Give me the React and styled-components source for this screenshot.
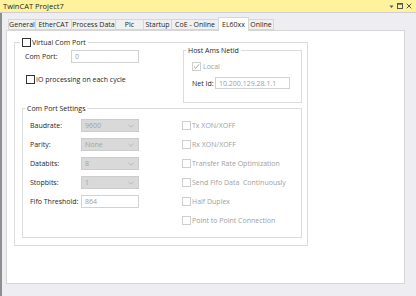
import React from 'react';
import styled, { createGlobalStyle } from 'styled-components';

const GlobalStyle = createGlobalStyle`
  html, body {
    margin: 0;
    padding: 0;
  }
  body {
    width: 416px;
    height: 296px;
    overflow: hidden;
    background: #eeeef2;
    font-family: "Open Sans", "Noto Sans", sans-serif;
    font-size: 7px;
    color: #1e1e1e;
  }
`;

const Window = styled.div`
  width: 416px;
  height: 296px;
  display: flex;
  flex-direction: column;
`;

const TitleBar = styled.div`
  height: 12px;
  flex: none;
  display: flex;
  align-items: center;
  justify-content: space-between;
  padding: 0 4px 0 3px;
  background: #fff29d;
  border-bottom: 1px solid #cfcfcf;
  font-size: 7.5px;
  color: #1e1e1e;
`;

const TitleButtons = styled.div`
  display: flex;
  align-items: center;
  gap: 3px;
  color: #555;
`;

const Body = styled.div`
  flex: 1;
  display: flex;
  flex-direction: column;
  border-left: 2px solid #8e8e8e;
  padding: 3px 11px 12px 4px;
  min-height: 0;
`;

const TabStrip = styled.div`
  display: flex;
  align-items: flex-end;
  margin-left: 3px;
  height: 14px;
`;

const Tab = styled.div`
  width: ${p => p.$w}px;
  height: ${p => (p.$active ? 14 : 11)}px;
  box-sizing: border-box;
  margin-left: -1px;
  margin-bottom: ${p => (p.$active ? -1 : 0)}px;
  display: flex;
  align-items: center;
  justify-content: center;
  background: ${p => (p.$active ? '#ffffff' : '#f0f0f0')};
  border: 1px solid #d6d6d6;
  border-bottom: ${p => (p.$active ? 'none' : '1px solid #d6d6d6')};
  color: #1e1e1e;
  position: relative;
  z-index: ${p => (p.$active ? 1 : 0)};
  white-space: nowrap;
`;

const Panel = styled.div`
  flex: 1;
  background: #ffffff;
  border: 1px solid #d6d6d6;
  padding: 11px 0 0 7px;
`;

const GroupBox = styled.div`
  display: flex;
  flex-direction: column;
  box-sizing: border-box;
  width: ${p => (p.$w ? `${p.$w}px` : 'auto')};
  border: 1px solid #dcdcdc;
  padding: ${p => p.$pad};
  margin-top: ${p => p.$mt || 0}px;
`;

const Legend = styled.div`
  align-self: flex-start;
  display: flex;
  align-items: center;
  gap: 1px;
  height: 9px;
  line-height: 9px;
  margin: -5px 0 0 ${p => p.$ml}px;
  padding: 0 2px;
  background: #ffffff;
  color: #1e1e1e;
  white-space: nowrap;
`;

const TopRow = styled.div`
  display: flex;
  margin-top: 3px;
`;

const LeftColumn = styled.div`
  width: 161px;
  display: flex;
  flex-direction: column;
`;

const FieldRow = styled.div`
  display: flex;
  align-items: center;
  height: ${p => p.$h || 13}px;
  margin-top: ${p => p.$mt || 0}px;
  padding-left: ${p => p.$pl || 0}px;
`;

const Label = styled.span`
  width: ${p => p.$w}px;
  flex: none;
  color: #1e1e1e;
  white-space: nowrap;
`;

const TextBox = styled.div`
  width: ${p => p.$w}px;
  height: ${p => p.$h || 13}px;
  box-sizing: border-box;
  display: flex;
  align-items: center;
  padding-left: 3px;
  background: #ffffff;
  border: 1px solid #d2d2d2;
  color: #a0a0a0;
`;

const Combo = styled.div`
  width: 58px;
  height: 13px;
  box-sizing: border-box;
  display: flex;
  align-items: center;
  justify-content: space-between;
  padding: 0 4px 0 3px;
  background: #d9d9d9;
  border: 1px solid #cccccc;
  color: #a3a3a3;
`;

const CheckRow = styled.div`
  display: flex;
  align-items: center;
  gap: ${p => p.$gap || 1}px;
  height: ${p => p.$h || 9}px;
  margin-top: ${p => p.$mt || 0}px;
  padding-left: ${p => p.$pl || 0}px;
  color: ${p => (p.$disabled ? '#a0a0a0' : '#1e1e1e')};
  white-space: pre;
`;

const Box = styled.span`
  width: 9px;
  height: 9px;
  box-sizing: border-box;
  flex: none;
  display: flex;
  align-items: center;
  justify-content: center;
  background: #ffffff;
  border: 1px solid ${p => (p.$disabled ? '#cfcfcf' : '#333333')};
`;

const SettingsGrid = styled.div`
  display: grid;
  grid-template-columns: 152px 1fr;
  margin-top: 3px;
`;

const Column = styled.div`
  display: flex;
  flex-direction: column;
`;

const Check = ({ checked, disabled }) => (
  <Box $disabled={disabled}>
    {checked && (
      <svg width="7" height="7" viewBox="0 0 7 7">
        <path d="M1 3.6 L2.8 5.3 L6 1.4" fill="none" stroke="#a8a8a8" strokeWidth="1" />
      </svg>
    )}
  </Box>
);

const Chevron = () => (
  <svg width="6" height="4" viewBox="0 0 6 4">
    <path d="M0.5 0.8 L3 3.2 L5.5 0.8" fill="none" stroke="#b0b0b0" strokeWidth="0.8" />
  </svg>
);

const tabs = [
  { name: 'General', w: 28 },
  { name: 'EtherCAT', w: 37 },
  { name: 'Process Data', w: 45 },
  { name: 'Plc', w: 29 },
  { name: 'Startup', w: 29 },
  { name: 'CoE - Online', w: 48 },
  { name: 'EL60xx', w: 31, active: true },
  { name: 'Online', w: 26 },
];

const combos = [
  { label: 'Baudrate:', value: '9600' },
  { label: 'Parity:', value: 'None' },
  { label: 'Databits:', value: '8' },
  { label: 'Stopbits:', value: '1' },
];

const options = [
  'Tx XON/XOFF',
  'Rx XON/XOFF',
  'Transfer Rate Optimization',
  'Send Fifo Data  Continuously',
  'Half Duplex',
  'Point to Point Connection',
];

export default function App() {
  return (
    <Window>
      <GlobalStyle />
      <TitleBar>
        <span>TwinCAT Project7</span>
        <TitleButtons>
          <svg width="5" height="5" viewBox="0 0 5 5">
            <path d="M0.5 1.5 L4.5 1.5 L2.5 4 Z" fill="#555" />
          </svg>
          <svg width="6" height="6" viewBox="0 0 6 6">
            <rect x="0.5" y="0.5" width="5" height="5" fill="none" stroke="#555" strokeWidth="1" />
            <line x1="0.5" y1="1.2" x2="5.5" y2="1.2" stroke="#555" strokeWidth="1" />
          </svg>
          <svg width="6" height="6" viewBox="0 0 6 6">
            <path d="M0.7 0.7 L5.3 5.3 M5.3 0.7 L0.7 5.3" stroke="#555" strokeWidth="1" />
          </svg>
        </TitleButtons>
      </TitleBar>
      <Body>
        <TabStrip>
          {tabs.map(t => (
            <Tab key={t.name} $w={t.w} $active={t.active}>
              {t.name}
            </Tab>
          ))}
        </TabStrip>
        <Panel>
          <GroupBox $w={294} $pad="0 5px 7px 7px">
            <Legend $ml={-2}>
              <Check />
              <span>Virtual Com Port</span>
            </Legend>
            <TopRow>
              <LeftColumn>
                <FieldRow $pl={3}>
                  <Label $w={46}>Com Port:</Label>
                  <TextBox $w={68}>0</TextBox>
                </FieldRow>
                <CheckRow $mt={12} $pl={4}>
                  <Check />
                  <span>IO processing on each cycle</span>
                </CheckRow>
              </LeftColumn>
              <GroupBox $w={119} $pad="0 8px 13px 8px">
                <Legend $ml={-6}>Host Ams Netid</Legend>
                <CheckRow $mt={7} $gap={2} $disabled>
                  <Check checked disabled />
                  <span>Local</span>
                </CheckRow>
                <FieldRow $mt={6} $h={12}>
                  <Label $w={23}>Net Id:</Label>
                  <TextBox $w={75} $h={12}>10.200.129.28.1.1</TextBox>
                </FieldRow>
              </GroupBox>
            </TopRow>
            <GroupBox $mt={5} $pad="0 7px 7px 7px">
              <Legend $ml={-5}>Com Port Settings</Legend>
              <SettingsGrid>
                <Column>
                  {combos.map(c => (
                    <FieldRow key={c.label} $h={19}>
                      <Label $w={51}>{c.label}</Label>
                      <Combo>
                        <span>{c.value}</span>
                        <Chevron />
                      </Combo>
                    </FieldRow>
                  ))}
                  <FieldRow $h={19}>
                    <Label $w={51}>Fifo Threshold:</Label>
                    <TextBox $w={58}>864</TextBox>
                  </FieldRow>
                </Column>
                <Column>
                  {options.map(o => (
                    <CheckRow key={o} $h={19} $disabled>
                      <Check disabled />
                      <span>{o}</span>
                    </CheckRow>
                  ))}
                </Column>
              </SettingsGrid>
            </GroupBox>
          </GroupBox>
        </Panel>
      </Body>
    </Window>
  );
}
